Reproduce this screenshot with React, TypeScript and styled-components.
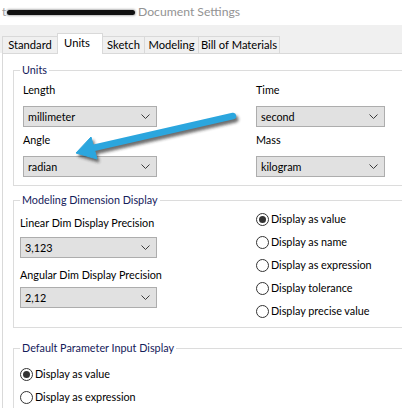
import React from "react";
import styled, { createGlobalStyle } from "styled-components";

const GlobalStyle = createGlobalStyle`
  html, body {
    margin: 0;
    padding: 0;
    background: #ffffff;
    overflow: hidden;
  }
  body {
    font-family: Lato, "Liberation Sans", sans-serif;
    font-size: 10.8px;
    color: #000000;
  }
`;

// tab captions with their box widths (borders overlap by 1px)
const tabs = [
  { label: "Standard", width: 56 },
  { label: "Units", width: 46 },
  { label: "Sketch", width: 43 },
  { label: "Modeling", width: 55 },
  { label: "Bill of Materials", width: 82 },
];

const modelingOptions = [
  "Display as value",
  "Display as name",
  "Display as expression",
  "Display tolerance",
  "Display precise value",
];

function Chevron() {
  return (
    <svg width="9" height="5" viewBox="0 0 9 5">
      <polyline points="0.5,0.5 4.5,4.5 8.5,0.5" fill="none" stroke="#3c3c3c" strokeWidth="1" />
    </svg>
  );
}

function Select({ value, width }: { value: string; width: number }) {
  return (
    <SelectBox $width={width}>
      <span>{value}</span>
      <Chevron />
    </SelectBox>
  );
}

function Radio({ label, checked }: { label: string; checked?: boolean }) {
  return (
    <RadioRow>
      <RadioCircle>{checked && <RadioDot />}</RadioCircle>
      <span>{label}</span>
    </RadioRow>
  );
}

export default function App() {
  return (
    <Page>
      <GlobalStyle />
      <TitleBar>
        <Redacted>t</Redacted>
        <Scribble />
        <TitleText>Document Settings</TitleText>
      </TitleBar>

      <TabStrip>
        {tabs.map((t) => (
          <Tab key={t.label} $width={t.width} $active={t.label === "Units"}>
            {t.label}
          </Tab>
        ))}
      </TabStrip>

      <Panel>
        <Group $mt={8}>
          <Legend>Units</Legend>
          <UnitsGrid>
            <Field>
              <Label>Length</Label>
              <Select value="millimeter" width={134} />
            </Field>
            <Field>
              <Label>Time</Label>
              <Select value="second" width={129} />
            </Field>
            <Field>
              <Label>Angle</Label>
              <Select value="radian" width={134} />
            </Field>
            <Field>
              <Label>Mass</Label>
              <Select value="kilogram" width={129} />
            </Field>
          </UnitsGrid>
        </Group>

        <Group $mt={6}>
          <Legend>Modeling Dimension Display</Legend>
          <ModelingGrid>
            <LeftCol>
              <Label>Linear Dim Display Precision</Label>
              <Spaced $mt={6}>
                <Select value="3,123" width={137} />
              </Spaced>
              <Spaced $mt={9}>
                <Label>Angular Dim Display Precision</Label>
              </Spaced>
              <Spaced $mt={4}>
                <Select value="2,12" width={137} />
              </Spaced>
            </LeftCol>
            <RadioCol>
              {modelingOptions.map((o, i) => (
                <Radio key={o} label={o} checked={i === 0} />
              ))}
            </RadioCol>
          </ModelingGrid>
        </Group>

        <Group $mt={12}>
          <Legend>Default Parameter Input Display</Legend>
          <DefaultCol>
            <Radio label="Display as value" checked />
            <Radio label="Display as expression" />
          </DefaultCol>
        </Group>
      </Panel>

      <ArrowLayer width="402" height="408" viewBox="0 0 402 408">
        <defs>
          <filter id="shadow" x="-20%" y="-50%" width="140%" height="200%">
            <feGaussianBlur stdDeviation="1.6" />
          </filter>
        </defs>
        <g transform="translate(2,3)" fill="#202020" stroke="#202020" opacity="0.65" filter="url(#shadow)">
          <line x1="233" y1="116" x2="93" y2="148" strokeWidth="7" strokeLinecap="round" />
          <polygon points="76,153 91,137 97,159" strokeWidth="1" strokeLinejoin="round" />
        </g>
        <g fill="#2ba6de" stroke="#2ba6de">
          <line x1="233" y1="116" x2="93" y2="148" strokeWidth="6.5" strokeLinecap="round" />
          <polygon points="76,153 91,137 97,159" strokeWidth="1" strokeLinejoin="round" />
        </g>
      </ArrowLayer>
    </Page>
  );
}

const Page = styled.div`
  position: relative;
  width: 402px;
  height: 408px;
  overflow: hidden;
  background: #ffffff;
`;

const TitleBar = styled.div`
  box-sizing: border-box;
  height: 25px;
  display: flex;
  align-items: center;
  padding: 0 0 3px 2px;
  background: #ffffff;
`;

const Redacted = styled.span`
  color: #9a9a9a;
  font-size: 12px;
  width: 5px;
`;

const Scribble = styled.span`
  width: 128px;
  height: 5px;
  margin-top: 2px;
  border-radius: 3px;
  background: #111111;
  box-shadow: 0 0 2px 1px #b8b8b8;
`;

const TitleText = styled.span`
  margin-left: 3px;
  font-size: 12.2px;
  color: #939393;
`;

const TabStrip = styled.div`
  height: 28px;
  display: flex;
  align-items: flex-end;
  padding-left: 2px;
  background: #f0f0f0;
`;

const Tab = styled.div<{ $active?: boolean; $width: number }>`
  position: relative;
  box-sizing: border-box;
  width: ${(p) => p.$width}px;
  height: ${(p) => (p.$active ? 21 : 17)}px;
  margin-left: -1px;
  margin-bottom: ${(p) => (p.$active ? -1 : 0)}px;
  padding: ${(p) => (p.$active ? "0 6px 3px 0" : "0 0 1px")};
  display: flex;
  align-items: center;
  justify-content: center;
  font-size: 11.2px;
  border: 1px solid #d9d9d9;
  border-bottom: none;
  background: ${(p) => (p.$active ? "#ffffff" : "#f0f0f0")};
  z-index: ${(p) => (p.$active ? 1 : 0)};
  &:first-child {
    margin-left: 0;
  }
`;

const Panel = styled.div`
  margin-left: 2px;
  width: 440px;
  height: 400px;
  padding: 0 0 0 10px;
  border-top: 1px solid #d9d9d9;
  border-left: 1px solid #d9d9d9;
  background: #ffffff;
  display: flex;
  flex-direction: column;
`;

const Group = styled.fieldset<{ $mt: number }>`
  margin: ${(p) => p.$mt}px 0 0 0;
  padding: 0 0 0 6px;
  border: 1px solid #dcdcdc;
  min-width: 0;
`;

const Legend = styled.legend`
  padding: 0 2px;
  line-height: 16px;
  color: #14205a;
`;

const UnitsGrid = styled.div`
  display: grid;
  grid-template-columns: 233px 129px;
  row-gap: 5px;
  padding: 4px 0 8px 3px;
`;

const Field = styled.div`
  display: flex;
  flex-direction: column;
  gap: 8px;
`;

const Label = styled.div`
  line-height: 16px;
  white-space: nowrap;
`;

const SelectBox = styled.div<{ $width: number }>`
  box-sizing: border-box;
  width: ${(p) => p.$width}px;
  height: 21px;
  display: flex;
  align-items: center;
  justify-content: space-between;
  padding: 0 6px 0 4px;
  border: 1px solid #adadad;
  background: #e1e1e1;
`;

const ModelingGrid = styled.div`
  display: grid;
  grid-template-columns: 236px 1fr;
  padding: 0 0 8px 0;
`;

const LeftCol = styled.div`
  display: flex;
  flex-direction: column;
  padding-top: 7px;
`;

const Spaced = styled.div<{ $mt: number }>`
  margin-top: ${(p) => p.$mt}px;
`;

const RadioCol = styled.div`
  display: flex;
  flex-direction: column;
  gap: 7px;
  padding-top: 3px;
`;

const DefaultCol = styled.div`
  display: flex;
  flex-direction: column;
  gap: 7px;
  padding: 10px 0 4px 0;
`;

const RadioRow = styled.div`
  display: flex;
  align-items: center;
  gap: 2px;
  line-height: 16px;
  white-space: nowrap;
`;

const RadioCircle = styled.span`
  box-sizing: border-box;
  width: 13px;
  height: 13px;
  border-radius: 50%;
  border: 1px solid #333333;
  background: #ffffff;
  display: flex;
  align-items: center;
  justify-content: center;
`;

const RadioDot = styled.span`
  width: 7px;
  height: 7px;
  border-radius: 50%;
  background: #333333;
`;

const ArrowLayer = styled.svg`
  position: absolute;
  left: 0;
  top: 0;
  pointer-events: none;
`;
